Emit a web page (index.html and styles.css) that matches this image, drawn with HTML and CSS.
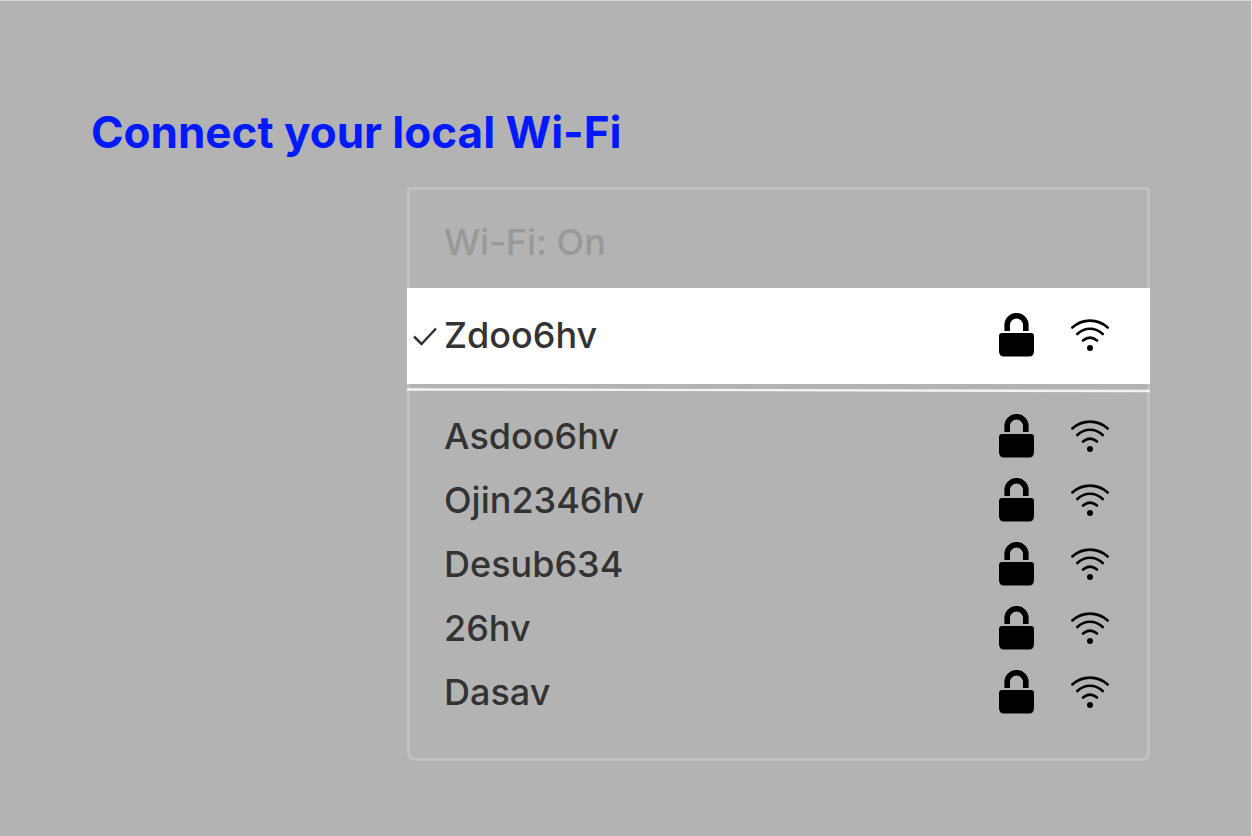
FILE: index.html
```html
<!DOCTYPE html>
<html lang="en">
<head>
  <meta charset="UTF-8">
  <meta name="viewport" content="width=device-width, initial-scale=1">
  <title>Connect your local Wi-Fi</title>
  <link rel="stylesheet" href="styles.css">
</head>
<body>
  <!-- shared icons -->
  <svg class="sprite" aria-hidden="true">
    <symbol id="lock" viewBox="0 0 36 44">
      <path d="M9.200 18V12a9.300 9.300 0 0 1 18.600 0V18" fill="none" stroke="currentColor" stroke-width="5.600"/>
      <path d="M4 20H33Q36 20 36 23V38Q36 43.500 31 43.500H6Q1 43.500 1 38V23Q1 20 4 20Z" fill="currentColor"/>
    </symbol>
    <symbol id="wifi" viewBox="0 0 40 34">
      <g fill="none" stroke="currentColor" stroke-width="2.600" stroke-linecap="round">
        <path d="M2.300 9.500C12.500 .300 27.500 .300 37.700 9.500"/>
        <path d="M7.300 16C14.600 9 25.400 9 32.700 16"/>
        <path d="M13 22.500Q20 16.800 27 22.500"/>
      </g>
      <circle cx="20" cy="30" r="3" fill="currentColor"/>
    </symbol>
  </svg>

  <main class="page">
    <h1>Connect your local Wi-Fi</h1>

    <section class="panel">
      <h2 class="status">Wi-Fi: On</h2>

      <button type="button" class="network selected" aria-pressed="true">
        <svg class="check" viewBox="0 0 24 24" aria-hidden="true"><path d="M1 13.500L8.500 21L23 5.500" fill="none" stroke="currentColor" stroke-width="2.500"/></svg>
        <span class="name">Zdoo6hv</span>
        <svg class="lock" aria-hidden="true"><use href="#lock"/></svg>
        <svg class="wifi" aria-hidden="true"><use href="#wifi"/></svg>
      </button>

      <svg class="divider" viewBox="0 0 742 5" preserveAspectRatio="none" aria-hidden="true"><path d="M0 1.500L742 3" stroke="currentColor" stroke-width="2.300"/></svg>

      <ul class="networks">
        <li>
          <button type="button" class="network">
            <span class="name">Asdoo6hv</span>
            <svg class="lock" aria-hidden="true"><use href="#lock"/></svg>
            <svg class="wifi" aria-hidden="true"><use href="#wifi"/></svg>
          </button>
        </li>
        <li>
          <button type="button" class="network">
            <span class="name">Ojin2346hv</span>
            <svg class="lock" aria-hidden="true"><use href="#lock"/></svg>
            <svg class="wifi" aria-hidden="true"><use href="#wifi"/></svg>
          </button>
        </li>
        <li>
          <button type="button" class="network">
            <span class="name">Desub634</span>
            <svg class="lock" aria-hidden="true"><use href="#lock"/></svg>
            <svg class="wifi" aria-hidden="true"><use href="#wifi"/></svg>
          </button>
        </li>
        <li>
          <button type="button" class="network">
            <span class="name">26hv</span>
            <svg class="lock" aria-hidden="true"><use href="#lock"/></svg>
            <svg class="wifi" aria-hidden="true"><use href="#wifi"/></svg>
          </button>
        </li>
        <li>
          <button type="button" class="network">
            <span class="name">Dasav</span>
            <svg class="lock" aria-hidden="true"><use href="#lock"/></svg>
            <svg class="wifi" aria-hidden="true"><use href="#wifi"/></svg>
          </button>
        </li>
      </ul>
    </section>
  </main>
</body>
</html>
```
FILE: styles.css
```css
* {
  box-sizing: border-box;
}

body {
  margin: 0;
  min-height: 100vh;
  background: #b3b3b3;
  border-top: 1px solid #d4d4d4;
  border-right: 1px solid #e4e4e4;
  font-family: Inter, sans-serif;
  color: #333;
}

.sprite {
  display: none;
}

.page {
  padding: 103px 101px 72px 91px;
}

h1 {
  margin: 0;
  font-size: 44px;
  line-height: 56px;
  font-weight: 700;
  color: #0019ff;
}

.panel {
  margin: 27px 0 0 316px;
  padding-bottom: 34px;
  border: 3px solid #c1c1c1;
  border-radius: 2px 2px 8px 8px;
}

.status {
  margin: 0;
  padding: 28px 34px 22px;
  font-size: 36px;
  line-height: 48px;
  font-weight: 500;
  color: #999;
}

.network {
  display: flex;
  align-items: center;
  width: 100%;
  height: 64px;
  padding: 0 37px 0 34px;
  border: 0;
  background: none;
  color: inherit;
  font: 500 36px/48px Inter, sans-serif;
  text-align: left;
  cursor: pointer;
}

.name {
  flex: 1;
}

/* covers the panel border on both sides */
.selected {
  width: calc(100% + 6px);
  height: 96px;
  margin: 0 -3px;
  padding: 0 40px 2px 6px;
  background: #fff;
}

.check {
  width: 24px;
  height: 24px;
  margin-right: 7px;
}

.lock {
  width: 36px;
  height: 44px;
  margin-right: 36px;
  color: #000;
}

.wifi {
  width: 40px;
  height: 34px;
  color: #000;
}

.divider {
  display: block;
  width: calc(100% + 6px);
  height: 5px;
  margin: 4px -3px 11px;
  color: #f4f4f4;
}

.networks {
  margin: 0;
  padding: 0;
  list-style: none;
}
```
